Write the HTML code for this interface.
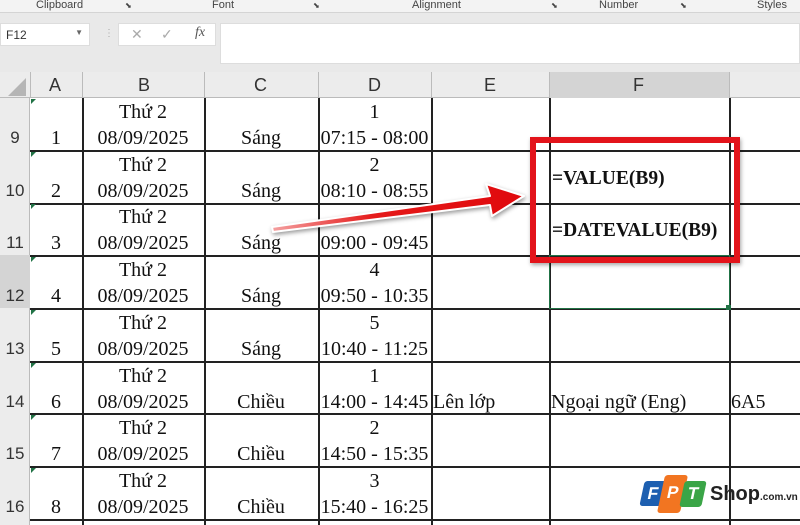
<!DOCTYPE html>
<html><head><meta charset="utf-8"><style>
*{margin:0;padding:0;box-sizing:border-box}
body{width:800px;height:525px;overflow:hidden;background:#fff;position:relative;font-family:"Liberation Sans",sans-serif}
.a{position:absolute}
.rib{top:0;left:0;width:800px;height:13px;background:#f3f3f3;border-bottom:1px solid #d4d4d4;font-size:11px;color:#444;line-height:11px}
.rib span{position:absolute;top:0}
.fb{top:13px;left:0;width:800px;height:59px;background:#e9e9e9}
.cell{font-family:"Liberation Serif",serif;font-size:20px;color:#111;text-align:center;line-height:26px}
.rh{font-size:17px;color:#333;text-align:center;width:30px;left:0}
.vl{width:1.5px;background:#222;top:98px;height:427px}
.hl{height:1.5px;background:#222;left:30px;width:770px}
</style></head><body>
<div class="a rib">
<span style="left:36px">Clipboard</span><span style="left:125px;font-size:8px">⬊</span>
<span style="left:212px">Font</span><span style="left:313px;font-size:8px">⬊</span>
<span style="left:412px">Alignment</span><span style="left:551px;font-size:8px">⬊</span>
<span style="left:599px">Number</span><span style="left:680px;font-size:8px">⬊</span>
<span style="left:757px">Styles</span>
</div>
<div class="a fb"></div>
<div class="a" style="left:0;top:23px;width:90px;height:23px;background:#fff;border:1px solid #ddd;font-size:12px;padding:4px 5px;color:#333">F12<span style="position:absolute;right:6px;top:4px;font-size:8px;color:#666">▼</span></div>
<div class="a" style="left:104px;top:28px;color:#aaa;font-size:10px">⋮</div>
<div class="a" style="left:118px;top:23px;width:98px;height:23px;background:#fff;border:1px solid #ddd;font-size:14px;color:#aaa"><span style="position:absolute;left:12px;top:2px">✕</span><span style="position:absolute;left:42px;top:2px">✓</span><span style="position:absolute;left:76px;top:1px;color:#555;font-family:'Liberation Serif';font-style:italic">fx</span></div>
<div class="a" style="left:220px;top:23px;width:580px;height:41px;background:#fff;border:1px solid #ddd"></div>
<div class="a" style="left:0;top:72px;width:800px;height:26px;background:#ececec;border-bottom:1px solid #bbb"></div>
<div class="a" style="left:549px;top:72px;width:180px;height:26px;background:#d4d4d4"></div>
<div class="a" style="left:8px;top:78px;width:0;height:0;border-left:18px solid transparent;border-bottom:18px solid #b5b5b5"></div>
<div class="a" style="left:0;top:98px;width:30px;height:427px;background:#ececec;border-right:1px solid #bbb"></div>
<div class="a" style="left:0;top:255px;width:30px;height:53px;background:#d4d4d4"></div>
<div class="a" style="top:75px;left:0;width:800px;font-size:18px;color:#333">
<span class="a" style="left:49px">A</span><span class="a" style="left:138px">B</span><span class="a" style="left:254px">C</span><span class="a" style="left:368px">D</span><span class="a" style="left:484px">E</span><span class="a" style="left:633px">F</span></div>
<div class="a" style="top:72px;left:30px;width:1px;height:26px;background:#bbb"></div>
<div class="a" style="top:72px;left:82px;width:1px;height:26px;background:#bbb"></div>
<div class="a" style="top:72px;left:204px;width:1px;height:26px;background:#bbb"></div>
<div class="a" style="top:72px;left:318px;width:1px;height:26px;background:#bbb"></div>
<div class="a" style="top:72px;left:431px;width:1px;height:26px;background:#bbb"></div>
<div class="a" style="top:72px;left:549px;width:1px;height:26px;background:#bbb"></div>
<div class="a" style="top:72px;left:729px;width:1px;height:26px;background:#bbb"></div>
<div class="a vl" style="left:82px"></div><div class="a vl" style="left:204px"></div><div class="a vl" style="left:318px"></div><div class="a vl" style="left:431px"></div><div class="a vl" style="left:549px"></div><div class="a vl" style="left:729px"></div>
<div class="a hl" style="top:150px"></div><div class="a hl" style="top:203px"></div><div class="a hl" style="top:255px"></div><div class="a hl" style="top:308px"></div><div class="a hl" style="top:361px"></div><div class="a hl" style="top:413px"></div><div class="a hl" style="top:466px"></div><div class="a hl" style="top:519px"></div>
<div id="rows"></div>
<script>
var D=[["1","07:15 - 08:00","Sáng"],["2","08:10 - 08:55","Sáng"],["3","09:00 - 09:45","Sáng"],["4","09:50 - 10:35","Sáng"],["5","10:40 - 11:25","Sáng"],["1","14:00 - 14:45","Chiều"],["2","14:50 - 15:35","Chiều"],["3","15:40 - 16:25","Chiều"]];
var h="";
for(var i=0;i<8;i++){var t=98+52.7*i;
h+='<div class="a rh" style="top:'+(t+30)+'px">'+(9+i)+'</div>';
h+='<div class="a cell" style="left:82px;width:122px;top:'+(t+1)+'px">Thứ 2<br>08/09/2025</div>';
h+='<div class="a cell" style="left:30px;width:52px;top:'+(t+27)+'px">'+(i+1)+'</div>';
h+='<div class="a cell" style="left:204px;width:114px;top:'+(t+27)+'px">'+D[i][2]+'</div>';
if(i!=2)h+='<div class="a cell" style="left:318px;width:113px;top:'+(t+1)+'px">'+D[i][0]+'</div>';
h+='<div class="a cell" style="left:318px;width:113px;top:'+(t+27)+'px">'+D[i][1]+'</div>';
h+='<div class="a" style="left:31px;top:'+(t+1)+'px;border-top:5px solid #217346;border-right:5px solid transparent"></div>';}
h+='<div class="a cell" style="left:433px;top:'+(98+52.7*5+27)+'px;text-align:left">Lên lớp</div>';
h+='<div class="a cell" style="left:551px;top:'+(98+52.7*5+27)+'px;text-align:left">Ngoại ngữ (Eng)</div>';
h+='<div class="a cell" style="left:731px;top:'+(98+52.7*5+27)+'px;text-align:left">6A5</div>';
document.getElementById("rows").innerHTML=h;
</script>
<div class="a" style="left:549px;top:255px;width:181px;height:54px;border:1.5px solid #217346"></div>
<div class="a" style="left:726px;top:305px;width:5px;height:5px;background:#217346"></div>
<div class="a" style="left:530px;top:137px;width:210px;height:126px;border:6px solid #e3141b;box-shadow:1px 2px 4px rgba(0,0,0,.35)"></div>
<div class="a cell" style="left:552px;top:166px;font-weight:bold;text-align:left;font-size:19.5px">=VALUE(B9)</div>
<div class="a cell" style="left:552px;top:218px;font-weight:bold;text-align:left;font-size:19.5px">=DATEVALUE(B9)</div>
<svg class="a" style="left:0;top:0" width="800" height="525">
<defs><linearGradient id="g" x1="0" x2="1"><stop offset="0" stop-color="#f4a0a0"/><stop offset=".4" stop-color="#e51a1a"/><stop offset="1" stop-color="#e0080c"/></linearGradient></defs>
<path d="M272 227 L490 196 L486 184 L524 196 L492 216 L490 205 L273 232 Z" fill="url(#g)" stroke="#fff" stroke-width="2" stroke-linejoin="round" style="filter:drop-shadow(1px 2px 2px rgba(0,0,0,.4))"/>
</svg>
<div class="a" style="left:642px;top:481px;width:22px;height:25px;background:#1d5fb0;transform:skewX(-12deg);border-radius:3px;color:#fff;font-weight:bold;font-size:17px;text-align:center;line-height:25px">F</div>
<div class="a" style="left:661px;top:475px;width:23px;height:38px;background:#f27521;transform:skewX(-12deg);border-radius:3px;color:#fff;font-weight:bold;font-size:17px;text-align:center;line-height:36px">P</div>
<div class="a" style="left:682px;top:481px;width:22px;height:26px;background:#3aa547;transform:skewX(-12deg);border-radius:3px;color:#fff;font-weight:bold;font-size:17px;text-align:center;line-height:25px">T</div>
<div class="a" style="left:710px;top:483px;font-weight:bold;font-size:20px;color:#222">Shop<span style="font-size:10px;font-weight:bold">.com.vn</span></div>
</body></html>
